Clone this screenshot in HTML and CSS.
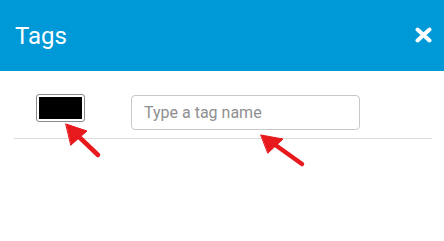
FILE: index.html
```html
<!DOCTYPE html>
<html>
<head>
<meta charset="utf-8">
<link rel="stylesheet" href="styles.css">
</head>
<body>
<div class="modal">
  <header class="header">
    <h1 class="title">Tags</h1>
    <svg class="close" viewBox="0 0 17 16" width="17" height="16" aria-label="Close">
      <path d="M2.5 2.5 L14.5 13.5 M14.5 2.5 L2.5 13.5" stroke="#fff" stroke-width="4" stroke-linecap="round"/>
    </svg>
  </header>
  <div class="content">
    <div class="row">
      <div class="swatch"><div class="swatch-fill"></div></div>
      <input class="tag-input" type="text" placeholder="Type a tag name">
    </div>
  </div>
  <svg class="arrows" width="444" height="241" viewBox="0 0 444 241">
    <g fill="#e8191c" stroke="#e8191c" stroke-linecap="round">
      <line x1="98" y1="155" x2="76" y2="134" stroke-width="4.5"/>
      <polygon points="66,124 87,131 71,145" stroke-width="1" stroke-linejoin="round"/>
      <line x1="302" y1="164" x2="274" y2="144" stroke-width="4.5"/>
      <polygon points="261,135 283,139 268,153" stroke-width="1" stroke-linejoin="round"/>
    </g>
  </svg>
</div>
</body>
</html>
```
FILE: styles.css
```css
html, body {
  margin: 0;
  padding: 0;
  background: #fff;
  font-family: Roboto, "Liberation Sans", sans-serif;
}
.modal {
  position: relative;
  width: 444px;
  height: 241px;
  overflow: hidden;
}
.header {
  height: 71px;
  background: #0099d8;
  display: flex;
  align-items: center;
  justify-content: space-between;
  padding: 0 12px 0 15px;
  box-sizing: border-box;
}
.title {
  margin: 0;
  color: #fff;
  font-size: 24px;
  font-weight: 400;
  line-height: 1;
  padding-bottom: 0;
}
.close {
  display: block;
  margin-top: -1px;
}
.content {
  padding: 0 12px 0 14px;
}
.row {
  display: flex;
  align-items: flex-start;
  padding: 23px 0 8px 22px;
  border-bottom: 1px solid #dcdcdc;
}
.swatch {
  width: 49px;
  height: 28px;
  box-sizing: border-box;
  border: 1px solid #8a8a8a;
  border-radius: 3px;
  padding: 2px;
  background: #fff;
}
.swatch-fill {
  width: 100%;
  height: 100%;
  background: #000;
}
.tag-input {
  margin: 1px 0 0 46px;
  width: 229px;
  height: 35px;
  box-sizing: border-box;
  border: 1px solid #c8c8c8;
  border-radius: 4px;
  padding: 0 12px;
  font-family: Roboto, "Liberation Sans", sans-serif;
  font-size: 16px;
  color: #333;
  outline: none;
}
.tag-input::placeholder {
  color: #8f8f8f;
}
.arrows {
  position: absolute;
  left: 0;
  top: 0;
  pointer-events: none;
}
```
